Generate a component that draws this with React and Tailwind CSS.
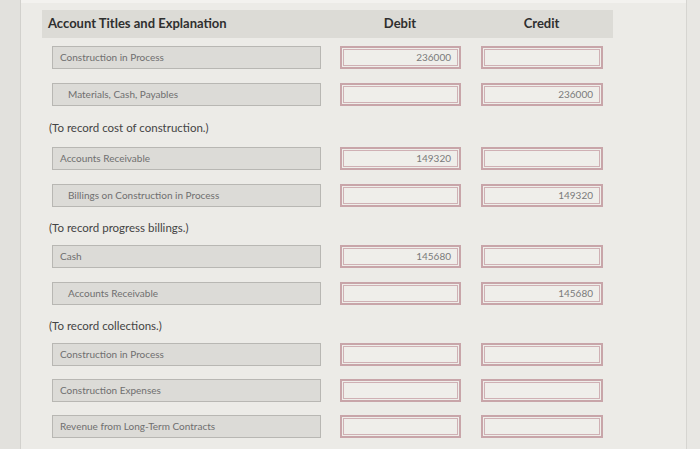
import React from 'react'

const entries = [
  { type: 'row', account: 'Construction in Process', debit: '236000', credit: '' },
  { type: 'row', account: 'Materials, Cash, Payables', debit: '', credit: '236000', indent: true },
  { type: 'note', text: '(To record cost of construction.)' },
  { type: 'row', account: 'Accounts Receivable', debit: '149320', credit: '' },
  { type: 'row', account: 'Billings on Construction in Process', debit: '', credit: '149320', indent: true },
  { type: 'note', text: '(To record progress billings.)' },
  { type: 'row', account: 'Cash', debit: '145680', credit: '' },
  { type: 'row', account: 'Accounts Receivable', debit: '', credit: '145680', indent: true },
  { type: 'note', text: '(To record collections.)' },
  { type: 'row', account: 'Construction in Process', debit: '', credit: '' },
  { type: 'row', account: 'Construction Expenses', debit: '', credit: '' },
  { type: 'row', account: 'Revenue from Long-Term Contracts', debit: '', credit: '' },
]

const AmountBox = ({ value, className }) => (
  <div className={`h-[23px] border-2 border-[#c8a5a9] bg-[#efeeea] p-px ${className}`}>
    <div className="h-full border border-[#cfb0b4] flex items-center justify-end pr-[6px] text-[10px] text-[#7a7a7a]">
      {value}
    </div>
  </div>
)

const Row = ({ account, debit, credit, indent, mt }) => (
  <div className={`grid grid-cols-[288px_140px_143px] ${mt}`}>
    <div className="pl-[10px]">
      <div
        className={`h-[23px] w-[269px] border border-[#b8b7b3] bg-[#dcdbd7] flex items-center text-[10px] text-[#6f6f6f] ${
          indent ? 'pl-[15px]' : 'pl-[7px]'
        }`}
      >
        {account}
      </div>
    </div>
    <div className="pl-[10px]">
      <AmountBox value={debit} className="w-[121px]" />
    </div>
    <div className="pl-[11px]">
      <AmountBox value={credit} className="w-[122px]" />
    </div>
  </div>
)

export default function App() {
  // spacing between blocks, picked to follow the screenshot
  const gaps = ['mt-[8px]', 'mt-[14px]', 'mt-[13px]', 'mt-[10px]', 'mt-[14px]', 'mt-[12px]', 'mt-[8px]', 'mt-[14px]', 'mt-[12px]', 'mt-[8px]', 'mt-[13px]', 'mt-[13px]']

  return (
    <div
      className="w-[700px] h-[449px] flex bg-[#ecebe7] overflow-hidden"
      style={{ fontFamily: 'Lato, "Open Sans", sans-serif' }}
    >
      <div className="w-[21px] shrink-0 bg-[#e2e1dd] border-r border-[#d2d1cd]" />

      <div className="flex-1 pl-[21px] pt-[7px] border-t-[3px] border-[#f3f2ef]">
        <div className="w-[571px] flex flex-col">
          {/* Header */}
          <div className="grid grid-cols-[288px_140px_143px] h-[28px] bg-[#dcdbd6] items-center text-[13px] font-bold text-[#2f2f2f]">
            <div className="pl-[6px]">Account Titles and Explanation</div>
            <div className="text-center">Debit</div>
            <div className="text-center">Credit</div>
          </div>

          {entries.map((e, i) =>
            e.type === 'note' ? (
              <div key={i} className={`${gaps[i]} h-[18px] leading-[18px] pl-[7px] text-[11.5px] text-[#444]`}>
                {e.text}
              </div>
            ) : (
              <Row key={i} {...e} mt={gaps[i]} />
            )
          )}
        </div>
      </div>

      <div className="w-[14px] shrink-0 bg-[#e8e7e3] border-l border-[#d6d5d1]" />
    </div>
  )
}
